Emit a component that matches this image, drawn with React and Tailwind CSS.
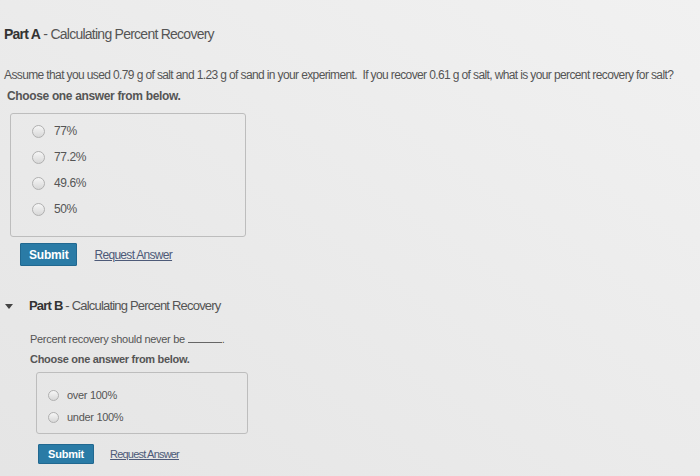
const Radio = ({ label }) => (
  <label className="flex items-center gap-[9px] h-[26px]">
    <span className="w-[13px] h-[13px] rounded-full border border-[#b0b0b0] bg-gradient-to-b from-[#f6f6f6] to-[#d8d8d8]" />
    <span className="text-[12px] text-[#555] tracking-[-0.4px]">{label}</span>
  </label>
);

const App = () => {
  const partA = ["77%", "77.2%", "49.6%", "50%"];
  const partB = ["over 100%", "under 100%"];

  return (
    <div
      className="w-[700px] h-[476px] overflow-hidden bg-gradient-to-bl from-[#f1f1f1] via-[#ebebeb] to-[#e5e5e5] text-[#444]"
      style={{ fontFamily: '"Liberation Sans", Arial, sans-serif' }}
    >
      <div className="pt-[24px] pl-[4px]">
        <div className="text-[14px] text-[#555] tracking-[-0.75px] whitespace-nowrap">
          <span className="font-bold text-[#333]">Part A</span> - Calculating Percent Recovery
        </div>

        <p className="mt-[21px] text-[12px] text-[#555] tracking-[-0.62px] whitespace-nowrap">
          Assume that you used 0.79 g of salt and 1.23 g of sand in your experiment.&nbsp; If you recover 0.61 g of salt, what is your percent recovery for salt?
        </p>
        <p className="mt-[3px] ml-[3px] text-[12px] font-bold text-[#555] tracking-[-0.35px]">Choose one answer from below.</p>

        <div className="mt-[8px] ml-[6px] w-[236px] h-[124px] border border-[#bdbdbd] rounded-[3px] pl-[21px] pt-[4px]">
          {partA.map((a) => (
            <Radio key={a} label={a} />
          ))}
        </div>

        <div className="mt-[6px] ml-[16px] flex items-center gap-[17px]">
          <button className="bg-[#2a7ba6] text-white text-[12px] font-bold px-[8px] h-[23px] rounded-[1px] border border-[#216890] tracking-[-0.2px]">
            Submit
          </button>
          <a className="text-[12px] text-[#4d5a78] underline tracking-[-0.7px]">Request Answer</a>
        </div>

        <div className="mt-[30px] h-[20px] flex items-center">
          <span className="ml-[1px] w-0 h-0 border-l-[4px] border-r-[4px] border-t-[5px] border-l-transparent border-r-transparent border-t-[#444]" />
          <span className="ml-[16px] text-[13px] text-[#555] tracking-[-0.8px] whitespace-nowrap">
            <span className="font-bold text-[#333]">Part B</span> - Calculating Percent Recovery
          </span>
        </div>

        <div className="ml-[26px]">
          <p className="mt-[15px] text-[11px] text-[#555] tracking-[-0.3px]">
            Percent recovery should never be <span className="inline-block w-[34px] border-b border-[#666]" />.
          </p>
          <p className="mt-[3px] text-[11px] font-bold text-[#555] tracking-[-0.3px]">Choose one answer from below.</p>

          <div className="mt-[5px] ml-[6px] w-[212px] h-[62px] border border-[#bdbdbd] rounded-[3px] pl-[11px] pt-[11px]">
            {partB.map((a) => (
              <label key={a} className="flex items-center gap-[8px] h-[22px]">
                <span className="w-[11px] h-[11px] rounded-full border border-[#b0b0b0] bg-gradient-to-b from-[#f6f6f6] to-[#d8d8d8]" />
                <span className="text-[11px] text-[#555] tracking-[-0.3px]">{a}</span>
              </label>
            ))}
          </div>

          <div className="mt-[10px] ml-[8px] flex items-center gap-[16px]">
            <button className="bg-[#2a7ba6] text-white text-[11px] font-bold px-[9px] h-[20px] rounded-[1px] border border-[#216890] tracking-[-0.2px]">
              Submit
            </button>
            <a className="text-[11px] text-[#4d5a78] underline tracking-[-0.8px]">Request Answer</a>
          </div>
        </div>
      </div>
    </div>
  );
};

export default App;
